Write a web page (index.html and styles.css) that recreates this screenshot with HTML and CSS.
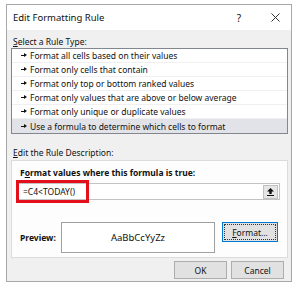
FILE: index.html
```html
<!DOCTYPE html>
<html lang="en">
<head>
    <meta charset="UTF-8">
    <meta name="viewport" content="width=device-width, initial-scale=1.0">
    <title>Edit Formatting Rule</title>
    <link rel="stylesheet" href="styles.css">
</head>
<body>
    <div class="dialog">
        <div class="titlebar">
            <span class="title">Edit Formatting Rule</span>
            <span class="help">?</span>
            <span class="close">
                <svg width="9" height="9" viewBox="0 0 9 9"><path d="M0.5 0.5 L8.5 8.5 M8.5 0.5 L0.5 8.5" stroke="#333" stroke-width="1"/></svg>
            </span>
        </div>

        <div class="content">
            <div class="section_label"><u>S</u>elect a Rule Type:</div>
            <ul class="rule_list">
                <li><i class="arr"></i>Format all cells based on their values</li>
                <li><i class="arr"></i>Format only cells that contain</li>
                <li><i class="arr"></i>Format only top or bottom ranked values</li>
                <li><i class="arr"></i>Format only values that are above or below average</li>
                <li><i class="arr"></i>Format only unique or duplicate values</li>
                <li class="selected"><i class="arr"></i>Use a formula to determine which cells to format</li>
            </ul>

            <div class="section_label desc_label"><u>E</u>dit the Rule Description:</div>
            <div class="desc_box">
                <div class="formula_label">F<u>o</u>rmat values where this formula is true:</div>
                <div class="formula_input">
                    <span class="formula_text">=C4&lt;TODAY()</span>
                    <span class="highlight"></span>
                    <span class="collapse_btn">
                        <svg width="9" height="9" viewBox="0 0 9 9"><path d="M4.5 1 L1 4.5 H3.3 V7 H5.7 V4.5 H8 Z" fill="#111"/><rect x="1" y="8" width="7" height="1" fill="#111"/></svg>
                    </span>
                </div>
                <div class="preview_row">
                    <span class="preview_label">Preview:</span>
                    <div class="preview_box">AaBbCcYyZz</div>
                    <button class="btn focused"><span><u>F</u>ormat...</span></button>
                </div>
            </div>
        </div>

        <div class="footer">
            <button class="btn">OK</button>
            <button class="btn">Cancel</button>
        </div>
    </div>
</body>
</html>
```

FILE: styles.css
```css
* { margin: 0; padding: 0; box-sizing: border-box; }
li { list-style: none; }
body {
    background: #fff;
    font-family: "Noto Sans", "Open Sans", sans-serif;
    font-size: 8.5px;
    color: #111;
}
u { text-decoration: underline; text-underline-offset: 1px; }

.dialog {
    margin: 4px 0 0 6px;
    width: 286px;
    height: 278px;
    border: 1px solid #a8a8a8;
    background: #f0f0f0;
    display: flex;
    flex-direction: column;
}
.titlebar {
    height: 25px;
    background: #fff;
    display: flex;
    align-items: center;
    padding-left: 6px;
}
.titlebar .title {
    font-size: 9.5px;
    flex: 1;
}
.titlebar .help {
    font-size: 10px;
    width: 20px;
    margin-right: 19px;
    text-align: center;
}
.titlebar .close {
    width: 14px;
    margin-right: 9px;
    display: flex;
    justify-content: center;
}

.content {
    padding: 0 3px 0 4px;
}
.section_label {
    line-height: 13px;
    padding: 5px 0 0 2px;
    height: 18px;
}
.desc_label {
    margin-top: 12px;
    height: 13px;
    padding-top: 0;
    margin-bottom: 1px;
}

.rule_list {
    background: #fff;
    border: 1px solid #82878f;
}
.rule_list li {
    height: 14px;
    line-height: 13px;
    padding-left: 9px;
    border-bottom: 1px solid #f0f0f0;
    white-space: nowrap;
    display: flex;
    align-items: center;
}
.rule_list li:last-child { border-bottom: none; }
.rule_list li.selected { background: #e2e3e8; }
.arr {
    display: inline-block;
    width: 6px;
    height: 5px;
    margin-right: 3px;
    position: relative;
}
.arr::before {
    content: "";
    position: absolute;
    left: 0;
    top: 2px;
    width: 3px;
    height: 1px;
    background: #111;
}
.arr::after {
    content: "";
    position: absolute;
    left: 3px;
    top: 0;
    border-left: 3px solid #111;
    border-top: 2.5px solid transparent;
    border-bottom: 2.5px solid transparent;
}

.desc_box {
    background: #fdfdfd;
    border: 1px solid #dcdcdc;
    height: 98px;
    padding: 5px 7px 0 5px;
}
.formula_label {
    font-weight: bold;
    line-height: 13px;
    padding-left: 3px;
}
.formula_input {
    position: relative;
    margin-top: 4px;
    height: 17px;
    border: 1px solid #c3c3c3;
    background: #fff;
    display: flex;
    align-items: center;
    padding-left: 5px;
}
.formula_text { flex: 1; }
.highlight {
    position: absolute;
    left: -2px;
    top: -4px;
    width: 73px;
    height: 23px;
    border: 3px solid #e3101b;
}
.collapse_btn {
    width: 15px;
    height: 14px;
    margin-right: 1px;
    background: #e6e6e6;
    border: 1px solid #c0c0c0;
    display: flex;
    align-items: center;
    justify-content: center;
}

.preview_row {
    margin-top: 22px;
    display: flex;
    align-items: flex-start;
}
.preview_label {
    font-weight: bold;
    width: 44px;
    padding-left: 3px;
    line-height: 31px;
}
.preview_box {
    width: 154px;
    height: 31px;
    border: 1px solid #a0a0a0;
    background: #fff;
    display: flex;
    align-items: center;
    justify-content: center;
    font-size: 9.5px;
}
.btn {
    font-family: inherit;
    font-size: 8.5px;
    color: #111;
    background: #e1e1e1;
    border: 1px solid #adadad;
    height: 20px;
}
.btn.focused {
    margin-left: 7px;
    width: 56px;
    border-color: #0078d7;
    padding: 1px;
}
.btn.focused span {
    display: block;
    height: 100%;
    line-height: 16px;
    border: 1px dotted #333;
}

.footer {
    display: flex;
    justify-content: flex-end;
    gap: 4px;
    padding: 3px 7px 0 0;
}
.footer .btn {
    width: 53px;
    height: 18px;
}
```
